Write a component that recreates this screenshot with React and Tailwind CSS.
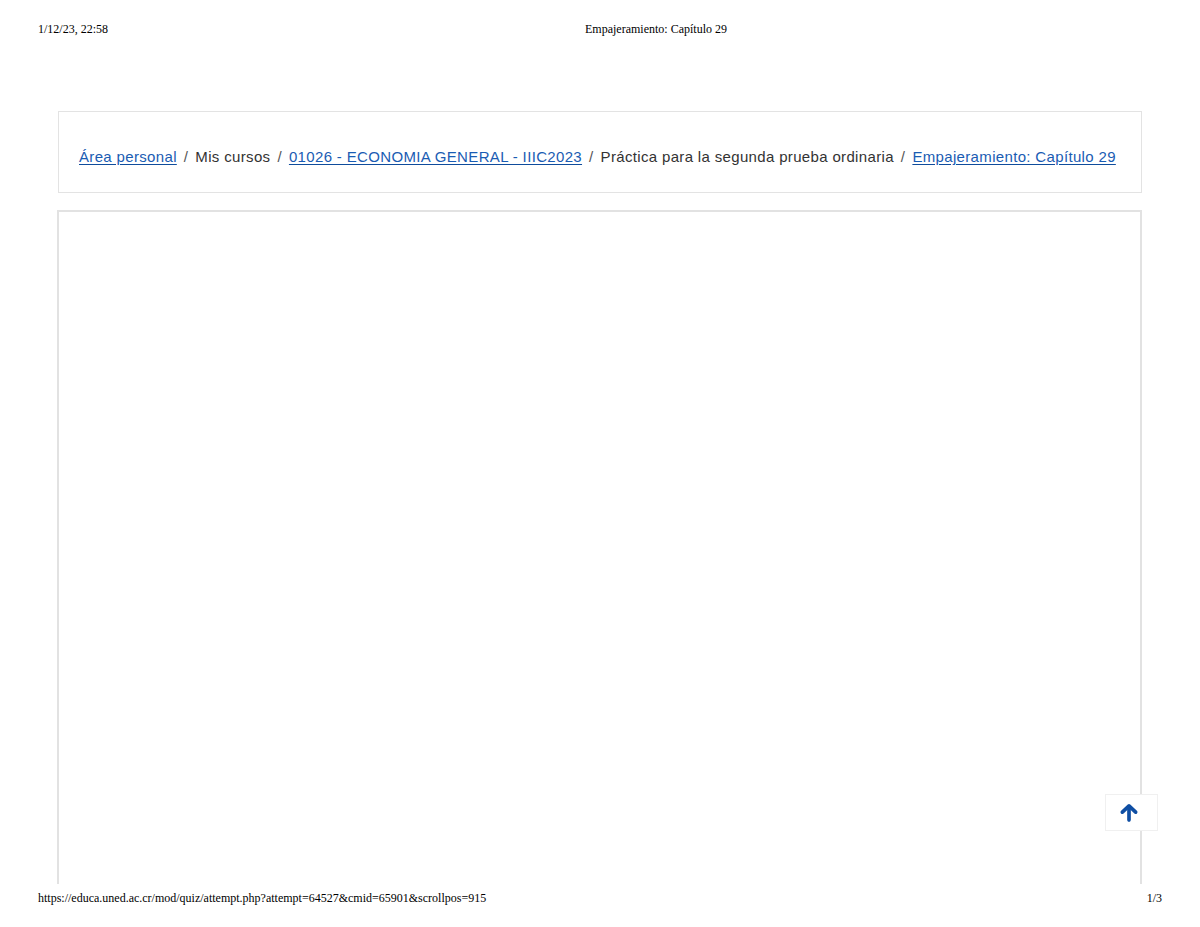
const crumbs = [
  { label: "Área personal", link: true },
  { label: "Mis cursos", link: false },
  { label: "01026 - ECONOMIA GENERAL - IIIC2023", link: true },
  { label: "Práctica para la segunda prueba ordinaria", link: false },
  { label: "Empajeramiento: Capítulo 29", link: true },
]

const ArrowUp = () => (
  <svg viewBox="0 0 24 24" className="w-[20px] h-[20px]" fill="none" stroke="#0f4ea3" strokeWidth="4.4" strokeLinecap="round" strokeLinejoin="round">
    <path d="M4 11 L12 3.5 L20 11" />
    <path d="M12 5 V20.5" />
  </svg>
)

const App = () => {
  return (
    <div className="relative w-[1200px] h-[927px] bg-white overflow-hidden">
      {/* print header */}
      <div className="flex items-center px-[38px] pt-[22px] text-[12px] leading-[14px] text-black font-['Liberation_Serif',serif]">
        <span>1/12/23, 22:58</span>
        <span className="ml-[477px]">Empajeramiento: Capítulo 29</span>
      </div>

      <div className="px-[58px] pt-[75px] font-['Liberation_Sans',Arial,sans-serif]">
        <div className="h-[82px] border border-[#e3e3e3] flex items-center px-[20px] pt-[11px] text-[15px] tracking-[0.34px] text-[#333]">
          {crumbs.map((c, i) => (
            <span key={i} className="flex items-center">
              {i > 0 && <span className="mx-[7px] text-[#555]">/</span>}
              {c.link ? (
                <a href="#" className="text-[#1a5cb3] underline decoration-[#0f4c9c] underline-offset-[2px]">
                  {c.label}
                </a>
              ) : (
                <span>{c.label}</span>
              )}
            </span>
          ))}
        </div>

        <div className="mt-[17px] ml-[-1px] h-[674px] border-2 border-b-0 border-[#e2e2e2] bg-white"></div>
      </div>

      <button className="absolute left-[1105px] top-[794px] w-[53px] h-[37px] bg-white border border-[#f0f0f0] flex items-center justify-center pr-[5px]">
        <ArrowUp />
      </button>

      {/* print footer */}
      <div className="absolute left-0 right-0 top-[891px] flex justify-between px-[38px] text-[12px] leading-[14px] text-black font-['Liberation_Serif',serif]">
        <span>https://educa.uned.ac.cr/mod/quiz/attempt.php?attempt=64527&amp;cmid=65901&amp;scrollpos=915</span>
        <span>1/3</span>
      </div>
    </div>
  )
}

export default App
